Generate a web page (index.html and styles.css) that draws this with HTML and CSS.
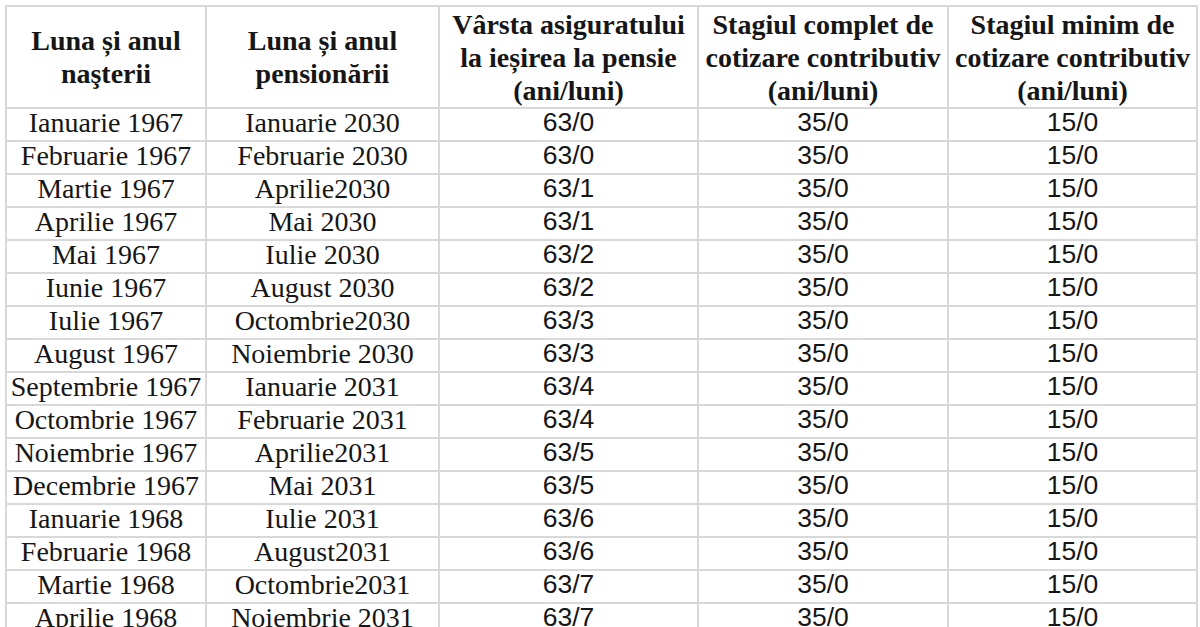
FILE: index.html
```html
<!DOCTYPE html>
<html lang="ro">
<head>
<meta charset="utf-8">
<title>Vârsta de pensionare</title>
<link rel="stylesheet" href="styles.css">
</head>
<body>
<table class="pension-table">
  <colgroup>
    <col class="c1"><col class="c2"><col class="c3"><col class="c4"><col class="c5">
  </colgroup>
  <thead>
    <tr class="head-row">
      <th>Luna și anul<br>naşterii</th>
      <th>Luna și anul<br>pensionării</th>
      <th>Vârsta asiguratului<br>la ieșirea la pensie<br>(ani/luni)</th>
      <th>Stagiul complet de<br>cotizare contributiv<br>(ani/luni)</th>
      <th>Stagiul minim de<br>cotizare contributiv<br>(ani/luni)</th>
    </tr>
  </thead>
  <tbody>
    <tr><td class="serif">Ianuarie 1967</td><td class="serif">Ianuarie 2030</td><td class="sans">63/0</td><td class="sans">35/0</td><td class="sans">15/0</td></tr>
    <tr><td class="serif">Februarie 1967</td><td class="serif">Februarie 2030</td><td class="sans">63/0</td><td class="sans">35/0</td><td class="sans">15/0</td></tr>
    <tr><td class="serif">Martie 1967</td><td class="serif">Aprilie2030</td><td class="sans">63/1</td><td class="sans">35/0</td><td class="sans">15/0</td></tr>
    <tr><td class="serif">Aprilie 1967</td><td class="serif">Mai 2030</td><td class="sans">63/1</td><td class="sans">35/0</td><td class="sans">15/0</td></tr>
    <tr><td class="serif">Mai 1967</td><td class="serif">Iulie 2030</td><td class="sans">63/2</td><td class="sans">35/0</td><td class="sans">15/0</td></tr>
    <tr><td class="serif">Iunie 1967</td><td class="serif">August 2030</td><td class="sans">63/2</td><td class="sans">35/0</td><td class="sans">15/0</td></tr>
    <tr><td class="serif">Iulie 1967</td><td class="serif">Octombrie2030</td><td class="sans">63/3</td><td class="sans">35/0</td><td class="sans">15/0</td></tr>
    <tr><td class="serif">August 1967</td><td class="serif">Noiembrie 2030</td><td class="sans">63/3</td><td class="sans">35/0</td><td class="sans">15/0</td></tr>
    <tr><td class="serif">Septembrie 1967</td><td class="serif">Ianuarie 2031</td><td class="sans">63/4</td><td class="sans">35/0</td><td class="sans">15/0</td></tr>
    <tr><td class="serif">Octombrie 1967</td><td class="serif">Februarie 2031</td><td class="sans">63/4</td><td class="sans">35/0</td><td class="sans">15/0</td></tr>
    <tr><td class="serif">Noiembrie 1967</td><td class="serif">Aprilie2031</td><td class="sans">63/5</td><td class="sans">35/0</td><td class="sans">15/0</td></tr>
    <tr><td class="serif">Decembrie 1967</td><td class="serif">Mai 2031</td><td class="sans">63/5</td><td class="sans">35/0</td><td class="sans">15/0</td></tr>
    <tr><td class="serif">Ianuarie 1968</td><td class="serif">Iulie 2031</td><td class="sans">63/6</td><td class="sans">35/0</td><td class="sans">15/0</td></tr>
    <tr><td class="serif">Februarie 1968</td><td class="serif">August2031</td><td class="sans">63/6</td><td class="sans">35/0</td><td class="sans">15/0</td></tr>
    <tr><td class="serif">Martie 1968</td><td class="serif">Octombrie2031</td><td class="sans">63/7</td><td class="sans">35/0</td><td class="sans">15/0</td></tr>
    <tr><td class="serif">Aprilie 1968</td><td class="serif">Noiembrie 2031</td><td class="sans">63/7</td><td class="sans">35/0</td><td class="sans">15/0</td></tr>
  </tbody>
</table>
</body>
</html>
```
FILE: styles.css
```css
html, body {
  margin: 0;
  padding: 0;
  background: #ffffff;
  overflow: hidden;
}

body {
  padding: 5px 0 0 5px;
  color: #161616;
  font-family: "Liberation Serif", "Times New Roman", serif;
}

.pension-table {
  border-collapse: collapse;
  table-layout: fixed;
  width: 1191px;
}

.c1 { width: 200px; }
.c2 { width: 233px; }
.c3 { width: 259px; }
.c4 { width: 250px; }
.c5 { width: 249px; }

.pension-table th,
.pension-table td {
  border: 2px solid #d8d8d8;
  padding: 0;
  text-align: center;
  vertical-align: middle;
  white-space: nowrap;
  overflow: visible;
}

.head-row {
  height: 102px;
}

.pension-table th {
  font-family: "Liberation Serif", "Times New Roman", serif;
  font-weight: bold;
  font-size: 28px;
  line-height: 33px;
}

.pension-table tbody tr {
  height: 33px;
}

.pension-table td {
  line-height: 27px;
  padding-bottom: 4px;
}

.serif {
  font-family: "Liberation Serif", "Times New Roman", serif;
  font-size: 28px;
}

.sans {
  font-family: "Liberation Sans", Arial, sans-serif;
  font-size: 26.5px;
}
```
